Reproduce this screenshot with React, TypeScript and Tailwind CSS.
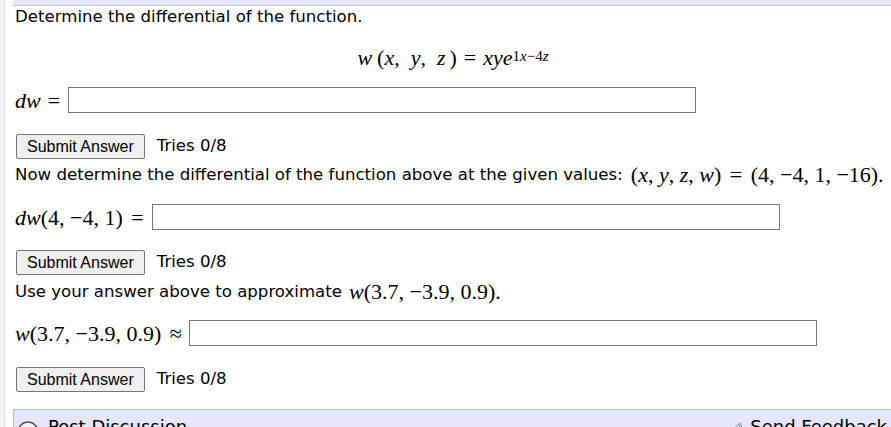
import React from "react";

const sans = "font-['DejaVu_Sans',Verdana,sans-serif]";
const serif = "font-['Liberation_Serif','Times_New_Roman',serif]";

function V({ children }: { children: React.ReactNode }) {
  return <span className="italic">{children}</span>;
}

function AnswerBox() {
  return <input type="text" className="h-[26px] w-[628px] shrink-0 border border-[#767676] bg-white" />;
}

function SubmitRow() {
  return (
    <div className="flex h-[25px] items-center">
      <button className="ml-[1px] h-[25px] rounded-[2px] border border-[#767676] bg-[#efefef] px-[10px] font-['Liberation_Sans',Arial,sans-serif] text-[16px] leading-none text-black">
        Submit Answer
      </button>
      <span className="ml-[12px] text-[16.6px]">Tries 0/8</span>
    </div>
  );
}

export default function App() {
  return (
    <div className={`flex h-[427px] w-[891px] overflow-hidden bg-white text-black ${sans}`}>
      <div className="w-[5px] shrink-0 border-r border-[#dcdcdc] bg-[#f4f4f4]" />
      <div className="ml-[8px] min-w-0 flex-1">
        <div className="h-[6px] border-b border-[#c8c8d0] bg-[#e6e6fa]" />
        <div className="pl-[2px]">
          <p className="mt-[1px] text-[16.6px] leading-[20px]">Determine the differential of the function.</p>

          <div className={`flex h-[60px] items-center justify-center text-[22px] ${serif}`}>
            <span className="whitespace-nowrap">
              <V>w</V>
              <span className="ml-[5px]">(</span>
              <V>x</V>,&nbsp; <V>y</V>,&nbsp; <V>z</V>
              <span className="ml-[4px]">)</span>
              <span className="mx-[7px]">=</span>
              <V>xye</V>
              <sup className="relative -top-[4px] text-[15px]">
                1<V>x</V>−4<V>z</V>
              </sup>
            </span>
          </div>

          <div className="flex h-[26px] items-center">
            <span className={`w-[53px] shrink-0 whitespace-nowrap text-[22px] ${serif}`}>
              <V>dw</V>
              <span className="ml-[7px]">=</span>
            </span>
            <AnswerBox />
          </div>

          <div className="mt-[21px]">
            <SubmitRow />
          </div>

          <p className="mt-[6px] flex h-[20px] items-center whitespace-nowrap text-[16.6px] leading-[20px]">
            Now determine the differential of the function above at the given values:
            <span className={`ml-[8px] text-[22px] ${serif}`}>
              (<V>x</V>, <V>y</V>, <V>z</V>, <V>w</V>) <span className="mx-[3px]">=</span> (4, −4, 1, −16).
            </span>
          </p>

          <div className="mt-[19px] flex h-[26px] items-center">
            <span className={`w-[137px] shrink-0 whitespace-nowrap text-[22px] ${serif}`}>
              <V>dw</V>(4, −4, 1) <span className="ml-[3px]">=</span>
            </span>
            <AnswerBox />
          </div>

          <div className="mt-[20px]">
            <SubmitRow />
          </div>

          <p className="mt-[7px] flex h-[20px] items-center whitespace-nowrap text-[16.6px] leading-[20px]">
            Use your answer above to approximate
            <span className={`ml-[7px] text-[22px] ${serif}`}>
              <V>w</V>(3.7, −3.9, 0.9).
            </span>
          </p>

          <div className="mt-[18px] flex h-[26px] items-center">
            <span className={`w-[174px] shrink-0 whitespace-nowrap text-[22px] ${serif}`}>
              <V>w</V>(3.7, −3.9, 0.9) <span className="ml-[3px]">≈</span>
            </span>
            <AnswerBox />
          </div>

          <div className="mt-[21px]">
            <SubmitRow />
          </div>
        </div>

        <div className="mt-[17px] flex h-[40px] items-start border-l border-t border-[#9fc0ec] bg-[#e6e6fa] pt-[5px]">
          <svg width="24" height="24" viewBox="0 0 24 24" className="ml-[2px] mt-[5px] shrink-0">
            <circle cx="12" cy="12" r="10" fill="#f4f4f4" stroke="#555" strokeWidth="1.5" />
            <path d="M7 9h10M7 12h10M7 15h7" stroke="#555" strokeWidth="1.3" />
          </svg>
          <span className="ml-[8px] text-[18px] leading-[24px]">Post Discussion</span>
          <div className="ml-auto mr-[4px] flex items-start">
            <svg width="24" height="22" viewBox="0 0 24 22" className="mt-[4px] shrink-0">
              <path d="M2 18 L18 4 L22 12 Z" fill="#c6d6ee" stroke="#7d98c4" strokeWidth="1" />
              <path d="M8 13 L18 4 L14 20 Z" fill="#e8eef8" stroke="#8aa2c8" strokeWidth="1" />
            </svg>
            <span className="ml-[4px] whitespace-nowrap text-[18px] leading-[24px]">Send Feedback</span>
          </div>
        </div>
      </div>
    </div>
  );
}
